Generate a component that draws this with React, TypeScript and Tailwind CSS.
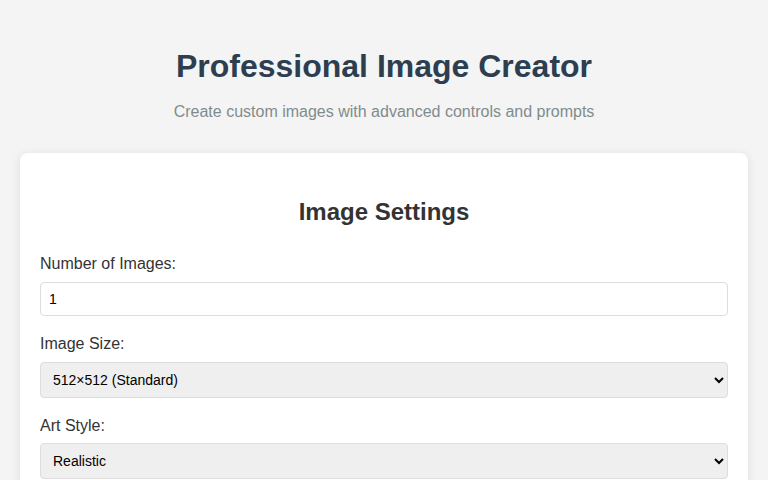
import { useState } from 'react'

export default function App() {
  const [count, setCount] = useState('1')
  const [size, setSize] = useState('512')
  const [style, setStyle] = useState('realistic')

  return (
    <div className="min-h-screen bg-[#f4f4f4] px-5 font-['Liberation_Sans',Arial,sans-serif] text-[#333]">
      {/* Header */}
      <header className="pt-[48px] text-center">
        <h1 className="text-[32px] font-bold leading-[37px] text-[#2c3e50]">Professional Image Creator</h1>
        <p className="mt-[18px] text-base leading-[18px] text-[#7f8c8d]">
          Create custom images with advanced controls and prompts
        </p>
      </header>

      {/* Settings card */}
      <div className="mt-[32px] rounded-lg bg-white px-5 pt-[45px] pb-6 shadow-[0_2px_10px_rgba(0,0,0,0.1)]">
        <h2 className="text-center text-2xl font-bold leading-[28px] text-[#333]">Image Settings</h2>

        <div className="mt-[29px]">
          <label className="mb-[9px] block text-base leading-[18px]">Number of Images:</label>
          <input
            type="number"
            value={count}
            onChange={(e) => setCount(e.target.value)}
            className="block h-[34px] w-full rounded border border-[#ddd] px-2 text-sm text-black outline-none [appearance:textfield] [&::-webkit-inner-spin-button]:appearance-none"
          />
        </div>

        <div className="mt-[19px]">
          <label className="mb-[9px] block text-base leading-[18px]">Image Size:</label>
          <select
            value={size}
            onChange={(e) => setSize(e.target.value)}
            className="block h-9 w-full rounded border border-[#ddd] bg-[#efefef] px-2 text-sm text-black outline-none"
          >
            <option value="256">256×256 (Small)</option>
            <option value="512">512×512 (Standard)</option>
            <option value="1024">1024×1024 (Large)</option>
          </select>
        </div>

        <div className="mt-[19px]">
          <label className="mb-[8px] block text-base leading-[18px]">Art Style:</label>
          <select
            value={style}
            onChange={(e) => setStyle(e.target.value)}
            className="block h-9 w-full rounded border border-[#ddd] bg-[#efefef] px-2 text-sm text-black outline-none"
          >
            <option value="realistic">Realistic</option>
            <option value="cartoon">Cartoon</option>
            <option value="watercolor">Watercolor</option>
            <option value="digital">Digital Art</option>
          </select>
        </div>
      </div>
    </div>
  )
}
